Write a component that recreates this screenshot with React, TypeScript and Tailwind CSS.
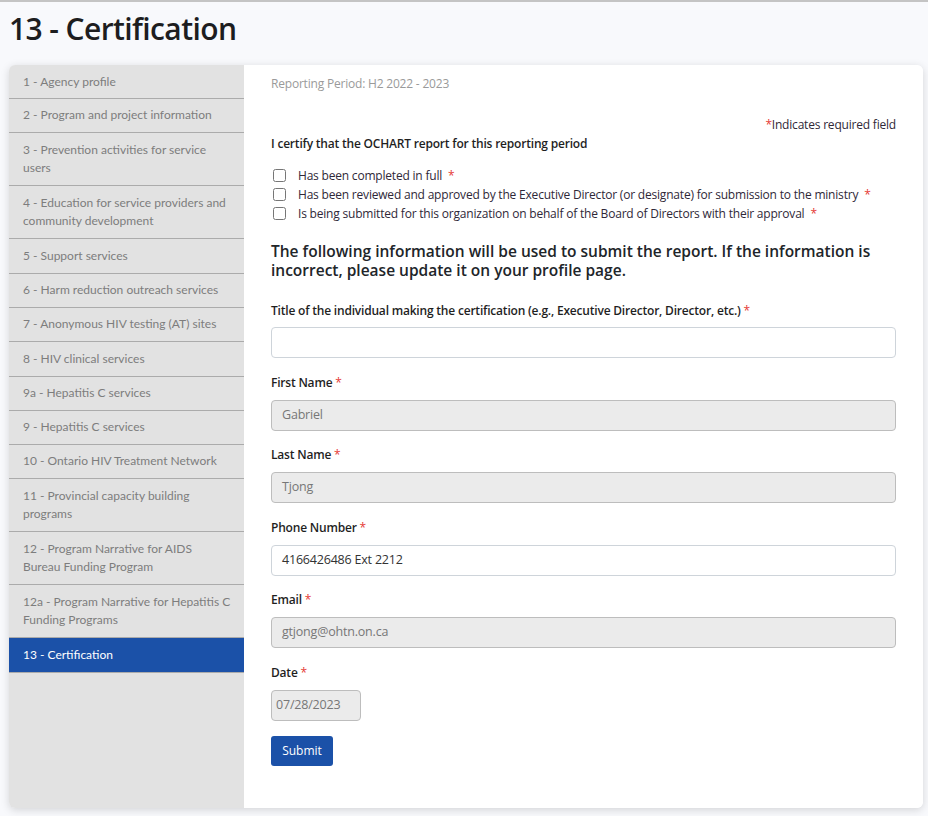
import React from "react";

const sections = [
  "1 - Agency profile",
  "2 - Program and project information",
  "3 - Prevention activities for service users",
  "4 - Education for service providers and community development",
  "5 - Support services",
  "6 - Harm reduction outreach services",
  "7 - Anonymous HIV testing (AT) sites",
  "8 - HIV clinical services",
  "9a - Hepatitis C services",
  "9 - Hepatitis C services",
  "10 - Ontario HIV Treatment Network",
  "11 - Provincial capacity building programs",
  "12 - Program Narrative for AIDS Bureau Funding Program",
  "12a - Program Narrative for Hepatitis C Funding Programs",
  "13 - Certification",
];

const checks = [
  "Has been completed in full",
  "Has been reviewed and approved by the Executive Director (or designate) for submission to the ministry",
  "Is being submitted for this organization on behalf of the Board of Directors with their approval",
];

export default function App() {
  return (
    <div
      className="min-h-[816px] bg-[#f8f9fc] border-t-2 border-[#c4c4c4] text-[#212529]"
      style={{ fontFamily: "'Open Sans', 'Noto Sans', sans-serif" }}
    >
      <h1 className="px-[9px] pt-[8px] h-[63px] text-[30px] leading-[38px] font-semibold tracking-[-0.6px] text-[#1d1d1f]">
        13 - Certification
      </h1>

      <div className="ml-[9px] mr-[5px] flex shadow-[0_2px_8px_rgba(0,0,0,0.15)] rounded-[6px]">
        <nav
          className="w-[235px] shrink-0 bg-[#e2e2e2] rounded-l-[6px] pt-[1px]"
          style={{ fontFamily: "Lato, 'Open Sans', sans-serif" }}
        >
          {sections.map((s, i) => {
            const active = i === sections.length - 1;
            return (
              <div
                key={s}
                className={
                  "pl-[14px] pr-[12px] text-[12px] leading-[18.7px] border-b border-[#ababab] " +
                  (i === 0 ? "py-[6.7px] " : "py-[7.3px] ") +
                  (active ? "bg-[#1b51a8] text-white" : "text-[#7d7d7d]")
                }
              >
                {s}
              </div>
            );
          })}
        </nav>

        <main className="flex-1 bg-white rounded-r-[6px] px-[27px] pt-[10px] pb-[42px] text-[12px] tracking-[-0.2px]">
          <p className="text-[#9a9a9a] leading-[18px]">Reporting Period: H2 2022 - 2023</p>
          <p className="mt-[23px] text-right leading-[18px] text-[#2f2838]">
            <span className="text-[#e53935]">*</span>Indicates required field
          </p>
          <p className="font-semibold leading-[18px] mt-[1px] text-[#1f1f1f]">
            I certify that the OCHART report for this reporting period
          </p>

          <div className="mt-[13px] flex flex-col">
            {checks.map((c) => (
              <label key={c} className="flex items-center h-[19px] leading-[19px] text-[#2f2838]">
                <input type="checkbox" className="ml-[2px] mr-[12px] w-[13px] h-[13px]" />
                <span>{c}</span>
                <span className="ml-[6px] text-[#e53935]">*</span>
              </label>
            ))}
          </div>

          <h2 className="mt-[19px] text-[15.5px] leading-[19px] font-semibold tracking-normal text-[#212529]">
            The following information will be used to submit the report. If the information is incorrect, please update
            it on your profile page.
          </h2>

          <div className="mt-[22px]">
            <Field label="Title of the individual making the certification (e.g., Executive Director, Director, etc.)" first>
              <input className="w-full h-[31px] rounded-[4px] border border-[#ced4da] bg-white px-[10px]" />
            </Field>
            <Field label="First Name">
              <ReadOnly value="Gabriel" />
            </Field>
            <Field label="Last Name">
              <ReadOnly value="Tjong" />
            </Field>
            <Field label="Phone Number">
              <div className="w-full h-[31px] rounded-[4px] border border-[#ced4da] bg-white px-[10px] flex items-center text-[12.5px] text-[#333]">
                4166426486 Ext 2212
              </div>
            </Field>
            <Field label="Email">
              <ReadOnly value="gtjong@ohtn.on.ca" />
            </Field>
            <Field label="Date">
              <div className="w-[90px] h-[31px] rounded-[4px] border border-[#bdbdbd] bg-[#ebebeb] px-[4px] flex items-center text-[12.5px] text-[#777]">
                07/28/2023
              </div>
            </Field>
          </div>

          <button className="mt-[15px] h-[30px] w-[62px] rounded-[3px] bg-[#1b51a8] text-white text-[12px] font-medium tracking-normal">
            Submit
          </button>
        </main>
      </div>
    </div>
  );
}

function Field({ label, children, first }: { label: string; children: React.ReactNode; first?: boolean }) {
  return (
    <div className={first ? "" : "mt-[15.5px]"}>
      <p className={"font-semibold leading-[18px] text-[#1f1f1f] " + (first ? "mb-[7px]" : "mb-[8px]")}>
        {label} <span className="text-[#e53935] font-normal">*</span>
      </p>
      {children}
    </div>
  );
}

function ReadOnly({ value }: { value: string }) {
  return (
    <div className="w-full h-[31px] rounded-[4px] border border-[#bdbdbd] bg-[#ebebeb] px-[10px] flex items-center text-[12.5px] text-[#777]">
      {value}
    </div>
  );
}
